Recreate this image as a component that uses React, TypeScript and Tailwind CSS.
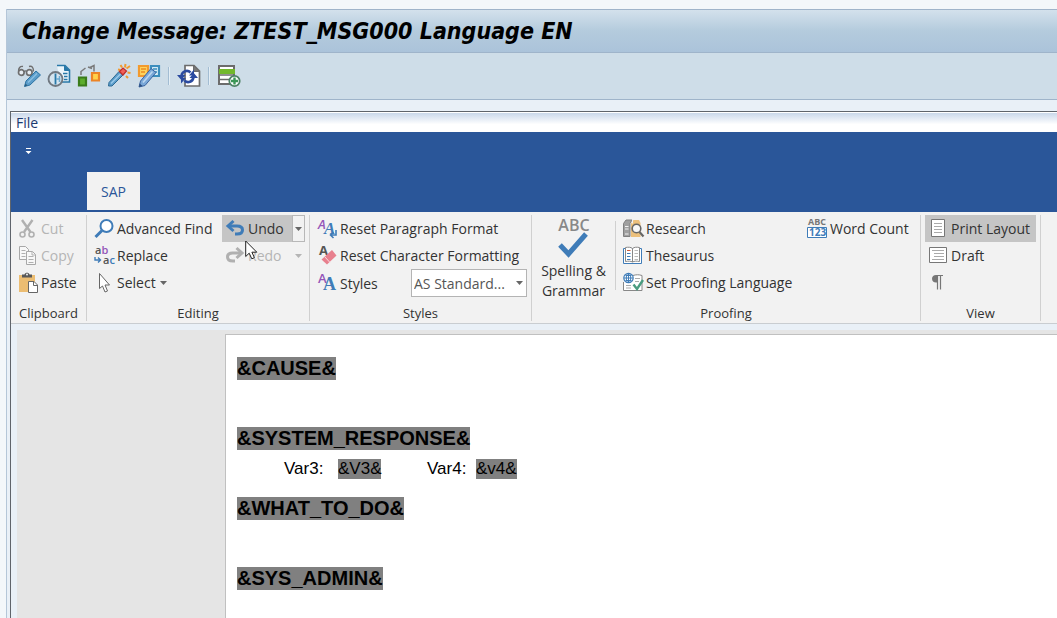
import React from 'react'

type IconProps = { children: React.ReactNode; size?: number }

const Icon = ({ children, size = 20 }: IconProps) => (
    <svg width={size} height={size} viewBox={`0 0 ${size} ${size}`} fill="none" className="shrink-0 overflow-visible" aria-hidden="true">
        {children}
    </svg>
)

const Caret = ({ className = '' }: { className?: string }) => (
    <svg width="7" height="4" viewBox="0 0 7 4" className={`shrink-0 ${className}`} aria-hidden="true">
        <path d="M0 0h7L3.5 4z" fill="currentColor" />
    </svg>
)

const toolbarIcons = {
    display: (
        <Icon size={24}>
            <path d="M1.500 7.500C1.500 4 3 2 6 2.500M7 8c1-1.500 2-1.500 3 0M12 2.500c3-1 4.500 1 4.500 5" stroke="#6f6f6f" strokeWidth="1.400" />
            <circle cx="4.300" cy="8.500" r="2.800" fill="#e8eef3" stroke="#6f6f6f" strokeWidth="1.700" />
            <circle cx="12.300" cy="8.500" r="2.800" fill="#e8eef3" stroke="#6f6f6f" strokeWidth="1.700" />
            <path d="M7.500 22.500l1.500-5.500L19 7l4.500 4L13 21z" fill="#5b9cc9" stroke="#2d74a4" strokeLinejoin="round" />
            <path d="M11 18.500l9-9" stroke="#8cc0e2" strokeWidth="1.500" />
            <path d="M7.500 22.500l1-3 2 2z" fill="#2d5f80" />
        </Icon>
    ),
    check: (
        <Icon size={24}>
            <path d="M10 1.500h8l4.500 4.500V18H13" fill="#eaf4fa" stroke="#2878a8" strokeWidth="1.600" />
            <path d="M17.500 1.500v5h5" fill="#2878a8" stroke="#2878a8" />
            <path d="M16 9.500h4.500M17 12.500h3.500M17 15.500h3.500" stroke="#2878a8" strokeWidth="1.400" />
            <circle cx="8.500" cy="15" r="7" fill="#d4e4ef" stroke="#707880" strokeWidth="1.900" />
            <path d="M8.500 9.500v11" stroke="#2878a8" strokeWidth="1.800" />
            <path d="M9 15h3M12.500 12v6" stroke="#6aa9cf" strokeWidth="1.500" />
        </Icon>
    ),
    objects: (
        <Icon size={24}>
            <path d="M4 11V7.500L8.500 4M11 3l4 1.500M13 3.500L17 1.500v6" stroke="#7a7a7a" strokeWidth="1.500" />
            <path d="M2 13.500h7v8H2z" fill="#5cad2c" stroke="#3b7c1b" strokeWidth="2.200" />
            <path d="M15 9h7v7.500h-7z" fill="#ffd24a" stroke="#ec8426" strokeWidth="2.200" />
        </Icon>
    ),
    activate: (
        <Icon size={24}>
            <path d="M13.500 1l1.500 2.500M18.500 0l-.5 3.500M23 2l-3.500 2.500M20.500 8.500l3 .5M19 12l2 2M11 5.500l2.500.5" stroke="#f29a2e" strokeWidth="2" />
            <path d="M1.500 22l.5-3.500L12 7.500l4 3.500L5 22z" fill="#5b9cc9" stroke="#2d6a94" strokeLinejoin="round" />
            <path d="M4 19.500l9.500-9.500" stroke="#9ccaea" strokeWidth="1.500" />
            <path d="M12.500 7.500L16 4l3.500 3L16 11z" fill="#f0605a" stroke="#c22e28" strokeWidth="1.200" />
        </Icon>
    ),
    compare: (
        <Icon size={24}>
            <path d="M2 2h9v10H2z" fill="#ffd45c" stroke="#f29a2e" strokeWidth="2.200" />
            <path d="M4 5h5M4 8h4" stroke="#ec8c22" strokeWidth="1.500" />
            <path d="M14 2h8v10h-8z" fill="#d7ecf7" stroke="#3d8ebd" strokeWidth="2.200" />
            <path d="M16 5h4M17 8h3" stroke="#3d8ebd" strokeWidth="1.500" />
            <path d="M2 23l1.500-6L14 4.500l5 4L8 21.500z" fill="#7aa8d8" stroke="#3a64a0" strokeLinejoin="round" />
            <path d="M6 18.500L15.500 7.500" stroke="#bcd6ef" strokeWidth="1.700" />
            <path d="M2 23l.8-3.500 2.700 2.500z" fill="#2d4f80" />
        </Icon>
    ),
    refresh: (
        <Icon size={24}>
            <path d="M8 1.500h9l5.500 5.500V22H8z" fill="#fff" stroke="#6c6c6c" strokeWidth="1.700" />
            <path d="M16.500 1.500V7.500h6z" fill="#777" stroke="#6c6c6c" />
            <path d="M4.500 12c.5-5 6-6.500 9-3.500M16.500 13c-.5 5-6 6.500-9 3.500" stroke="#2b4ba0" strokeWidth="2.600" />
            <path d="M0 11h8.500l-4.200 5zM12.500 14H21l-4.200-5z" fill="#2b4ba0" />
            <path d="M12 11.500h5V5.500zM9 14H4v5.500z" fill="#2b4ba0" />
        </Icon>
    ),
    append: (
        <Icon size={24}>
            <path d="M2 2h15v18H2z" fill="#fff" stroke="#6c6c6c" strokeWidth="2" />
            <path d="M2 5h16v5H2z" fill="#72b82c" />
            <path d="M2 11h15M2 15.500h12" stroke="#6c6c6c" strokeWidth="1.500" />
            <circle cx="17.500" cy="17" r="5.200" fill="#fff" stroke="#4e8265" strokeWidth="1.800" />
            <path d="M17.500 13.500v7M14 17h7" stroke="#3b9656" strokeWidth="2.400" />
        </Icon>
    ),
}

const CutIcon = () => (
    <Icon>
        <path d="M3 1l8.500 12M13.500 1L5 13" stroke="#b0b0b0" strokeWidth="2.400" />
        <circle cx="3.500" cy="15.500" r="2.500" stroke="#b0b0b0" strokeWidth="1.600" />
        <circle cx="12.500" cy="15.500" r="2.500" stroke="#b0b0b0" strokeWidth="1.600" />
    </Icon>
)

const CopyIcon = () => (
    <Icon>
        <path d="M.5 .5h6l3 3v10h-9z" fill="#f8f8f8" stroke="#a8a8a8" />
        <path d="M2.500 4.500h4M2.500 7.500h4M2.500 10.500h4" stroke="#b0b0b0" />
        <path d="M7.500 5.500h6l3 3v10h-9z" fill="#f8f8f8" stroke="#a8a8a8" />
        <path d="M13 5.500V9h3.500M9.500 10.500h5M9.500 13.500h5M9.500 16.500h5" stroke="#b0b0b0" />
    </Icon>
)

const PasteIcon = () => (
    <Icon>
        <path d="M0 2h16v17H0z" fill="#ecbd72" />
        <path d="M3 1.500h2.500C6-1 10-1 10.500 1.500H13v3H3z" fill="#595959" />
        <circle cx="8" cy="1.500" r="1" fill="#f2f2f2" />
        <path d="M9.500 8.500H15l3.500 3.500v7.500h-9z" fill="#fff" stroke="#666" />
        <path d="M14.500 8.500v4h4" stroke="#666" />
    </Icon>
)

const FindIcon = () => (
    <Icon>
        <circle cx="11.500" cy="7" r="6" fill="#fff" stroke="#3f7cb8" strokeWidth="2" />
        <path d="M7 11.500L.5 18" stroke="#3f7cb8" strokeWidth="3" />
    </Icon>
)

const ReplaceIcon = () => (
    <Icon>
        <text y="8" fontFamily="'Open Sans', sans-serif" fontSize="11" fontWeight="600" fill="#555">
            a<tspan fill="#9455b8">b</tspan>
        </text>
        <text x="8" y="18" fontFamily="'Open Sans', sans-serif" fontSize="11" fontWeight="600" fill="#555">
            a<tspan fill="#3f7cb8">c</tspan>
        </text>
        <path d="M0 11v3h5M3 11.500L5.500 14 3 16.500" stroke="#3f7cb8" strokeWidth="1.400" />
    </Icon>
)

const SelectIcon = () => (
    <Icon>
        <path d="M4.500 .5v15l3-2.500 2.500 6 2.500-1L10 12h4.500z" fill="#fff" stroke="#666" />
    </Icon>
)

const UndoIcon = () => (
    <Icon>
        <path d="M3 7h8c3.500 0 5.500 1.500 5.500 4s-2 4-5.500 4H9" stroke="#3f7cb8" strokeWidth="3" />
        <path d="M7.500 2L2 7l5.500 5" stroke="#3f7cb8" strokeWidth="3" />
    </Icon>
)

const RedoIcon = () => (
    <Icon>
        <path d="M14 7H6.500C3.500 7 1.500 8.500 1.500 11s2 4 5.500 4h2" stroke="#b0b0b0" strokeWidth="3" />
        <path d="M10.500 2L16 7l-5.500 5" stroke="#b0b0b0" strokeWidth="3" />
    </Icon>
)

const ResetParagraphIcon = () => (
    <Icon>
        <text x="0" y="10" fontFamily="'Open Sans', sans-serif" fontSize="13" fontStyle="italic" fontWeight="600" fill="#9455b8">A</text>
        <text x="6" y="15" fontFamily="'Liberation Serif', serif" fontSize="17" fontStyle="italic" fontWeight="700" fill="#3f7cb8">A</text>
        <path d="M18 11v5h-5M15.500 13L12.500 16l3 3" stroke="#3f7cb8" strokeWidth="1.600" />
    </Icon>
)

const ResetCharacterIcon = () => (
    <Icon>
        <text x="1" y="9" fontFamily="'Open Sans', sans-serif" fontSize="13" fontWeight="700" fill="#555">A</text>
        <path d="M3.500 13.500L14 4l4.500 5.500L9 18.500z" fill="#e8808e" />
        <path d="M6.500 10.500l5.500 6" stroke="#f8dce0" />
    </Icon>
)

const StylesIcon = () => (
    <Icon>
        <text x="0" y="10" fontFamily="'Open Sans', sans-serif" fontSize="13" fontWeight="600" fill="#9455b8">A</text>
        <text x="5" y="17" fontFamily="'Liberation Serif', serif" fontSize="18" fontWeight="700" fill="#3f7cb8">A</text>
    </Icon>
)

const ResearchIcon = () => (
    <Icon>
        <path d="M-.5 4.500L2 1h6L6 4.500v13h-6.500z" fill="#a0a0a0" stroke="#808080" />
        <path d="M1 7.500h3.500M1 10h3.500M1 15h3.500" stroke="#f2f2f2" />
        <path d="M7 4.500L9.500 1H15l1.500 3v14H7z" fill="#ecc07c" />
        <path d="M8.500 1v3.500" stroke="#f2f2f2" />
        <circle cx="12.500" cy="9.500" r="4.300" fill="#f8f8f8" stroke="#666" strokeWidth="1.600" />
        <path d="M15.500 13l4 4.500" stroke="#666" strokeWidth="2.200" />
    </Icon>
)

const ThesaurusIcon = () => (
    <Icon>
        <path d="M-.5 2.500h18v15h-18z" fill="#fff" stroke="#3f7cb8" />
        <path d="M1.500 1.500c3-.5 5-.5 7 1 2-1.500 4-1.500 7-1v14c-3-.5-5-.5-7 .5-2-1-4-1-7-.5z" fill="#fff" stroke="#888" />
        <path d="M8.500 2.500V16" stroke="#888" />
        <path d="M3 4.500h3.500" stroke="#d05a38" />
        <path d="M3 7.500h3.500M3 10.500h3.500M3 13.500h3.500" stroke="#3f7cb8" />
        <path d="M10.500 4.500H14M10.500 7.500H14M10.500 10.500H14M10.500 13.500H14" stroke="#bbb" />
    </Icon>
)

const LanguageIcon = () => (
    <Icon>
        <path d="M9 2.500c3-1 6-1 9 0v15H-.5V9" fill="#fff" stroke="#888" />
        <path d="M2 12.500h5M2 15h5M11 5.500h5M11 8.500h4" stroke="#aaa" />
        <circle cx="4.500" cy="5" r="4.700" fill="#fff" stroke="#3f7cb8" strokeWidth="1.200" />
        <path d="M0 5h9M4.500.5v9M1.500 2.500h6M1.500 7.500h6" stroke="#3f7cb8" />
        <ellipse cx="4.500" cy="5" rx="2.200" ry="4.500" stroke="#3f7cb8" />
        <path d="M9.500 11.500l3.500 4.500L19 7" stroke="#4a9c80" strokeWidth="2.400" />
    </Icon>
)

const WordCountIcon = () => (
    <Icon>
        <text x="0" y="6" fontFamily="'Open Sans', sans-serif" fontSize="9" fontWeight="700" fill="#777">ABC</text>
        <path d="M-.5 8.500h19v10h-19z" fill="#fff" stroke="#3f7cb8" />
        <text x="1" y="17" fontFamily="'Open Sans', sans-serif" fontSize="10" fontWeight="700" fill="#3f7cb8">123</text>
    </Icon>
)

const PrintLayoutIcon = () => (
    <Icon>
        <path d="M2.500 .5h13v17h-13z" fill="#fff" stroke="#777" />
        <path d="M5 4.500h8M5 7.500h8M5 10.500h8M5 13.500h8" stroke="#aaa" />
    </Icon>
)

const DraftIcon = () => (
    <Icon>
        <path d="M.5 1.500h17v15H.5z" fill="#fff" stroke="#777" />
        <path d="M3 4.500h12M5 7.500h10M5 10.500h10M3 13.500h12" stroke="#aaa" />
    </Icon>
)

const ParagraphIcon = () => (
    <Icon>
        <path d="M7 2.500h7M8.500 2.500v14M11.500 2.500v14" stroke="#777" strokeWidth="1.200" />
        <path d="M8.500 2H7C4.500 2 3 3.500 3 5.700S4.500 9.500 7 9.500h1.500z" fill="#777" />
    </Icon>
)

type CommandProps = {
    icon: React.ReactNode
    label: string
    disabled?: boolean
    caret?: boolean
    className?: string
}

const Command = ({ icon, label, disabled, caret, className = '' }: CommandProps) => (
    <button
        type="button"
        disabled={disabled}
        className={`flex h-[27px] items-center gap-[2px] whitespace-nowrap disabled:text-[#b5b5b5] ${className}`}
    >
        {icon}
        {label}
        {caret && <Caret className="ml-[2px] text-[#666]" />}
    </button>
)

type GroupProps = { title: string; className: string; children: React.ReactNode }

const Group = ({ title, className, children }: GroupProps) => (
    <section aria-label={title} className={`flex shrink-0 flex-col border-r border-[#d0d0d0] ${className}`}>
        <div className="flex h-[81px]">{children}</div>
        <div className="mt-2 text-center text-[13px] leading-[18px]">{title}</div>
    </section>
)

const Mark = ({ children }: { children: React.ReactNode }) => (
    <mark className="inline-block bg-[#808080] text-black">{children}</mark>
)

const ToolButton = ({ label, children }: { label: string; children: React.ReactNode }) => (
    <button type="button" aria-label={label}>{children}</button>
)

const Separator = () => <div className="mx-px h-[18px] w-[2px] border-r border-l border-r-[#e4eef5] border-l-[#a3bdd3]" />

const Ribbon = () => (
    <div className="flex h-[112px] overflow-hidden border-b border-[#c9cdd1] bg-[#f2f2f2] pt-[3px] pb-[2px] text-[14px] text-[#333]">
        <Group title="Clipboard" className="w-[76px]">
            <div className="pl-2">
                <Command icon={<CutIcon />} label="Cut" disabled />
                <Command icon={<CopyIcon />} label="Copy" disabled />
                <Command icon={<PasteIcon />} label="Paste" />
            </div>
        </Group>

        <Group title="Editing" className="w-[223px]">
            <div className="w-[135px] pl-2">
                <Command icon={<FindIcon />} label="Advanced Find" />
                <Command icon={<ReplaceIcon />} label="Replace" />
                <Command icon={<SelectIcon />} label="Select" caret />
            </div>
            <div>
                <div className="flex">
                    <Command icon={<UndoIcon />} label="Undo" className="w-[70px] bg-[#c5c5c5] pl-1" />
                    <button type="button" aria-label="Undo history" className="flex w-[13px] items-center justify-center border border-[#b8b8b8] text-[#666]">
                        <Caret />
                    </button>
                </div>
                <div className="relative flex">
                    <Command icon={<RedoIcon />} label="Redo" disabled className="w-[70px] pl-1" />
                    <button type="button" aria-label="Redo history" disabled className="flex w-[13px] items-center justify-center text-[#b5b5b5]">
                        <Caret />
                    </button>
                    <svg width="13" height="20" viewBox="0 0 13 20" className="absolute -top-[2px] left-[23px]" aria-hidden="true">
                        <path d="M.7 1v15.500l3.500-3.300 2.600 5.600 2.600-1.200-2.500-5.400h4.900z" fill="#fff" stroke="#222" />
                    </svg>
                </div>
            </div>
        </Group>

        <Group title="Styles" className="w-[222px]">
            <div className="w-full pr-1 pl-2">
                <Command icon={<ResetParagraphIcon />} label="Reset Paragraph Format" />
                <Command icon={<ResetCharacterIcon />} label="Reset Character Formatting" />
                <div className="flex items-center justify-between">
                    <label htmlFor="style" className="flex items-center gap-[2px]">
                        <StylesIcon />
                        Styles
                    </label>
                    <div className="relative">
                        <select id="style" className="h-[28px] w-[116px] appearance-none border border-[#b4b4b4] bg-white pl-[2px] text-[#555]">
                            <option>AS Standard...</option>
                        </select>
                        <Caret className="pointer-events-none absolute top-3 right-1 text-[#666]" />
                    </div>
                </div>
            </div>
        </Group>

        <Group title="Proofing" className="w-[389px]">
            <button type="button" className="flex w-[83px] flex-col items-center leading-[20px]">
                <svg width="34" height="43" viewBox="0 0 34 43" fill="none" className="mt-[3px] shrink-0" aria-hidden="true">
                    <text x="17" y="13" textAnchor="middle" fontFamily="'Open Sans', sans-serif" fontSize="16" fontWeight="600" fill="#888">ABC</text>
                    <path d="M3 27l8.500 9L29 16" stroke="#3f7cb8" strokeWidth="5" />
                </svg>
                <span>Spelling &amp;</span>
                <span>Grammar</span>
            </button>
            <div className="my-[6px] w-px bg-[#d0d0d0]" />
            <div className="w-[192px] pl-2">
                <Command icon={<ResearchIcon />} label="Research" />
                <Command icon={<ThesaurusIcon />} label="Thesaurus" />
                <Command icon={<LanguageIcon />} label="Set Proofing Language" />
            </div>
            <div>
                <Command icon={<WordCountIcon />} label="Word Count" />
            </div>
        </Group>

        <Group title="View" className="w-[120px]">
            <div className="w-full px-1">
                <Command icon={<PrintLayoutIcon />} label="Print Layout" className="w-full bg-[#c5c5c5] pl-1" />
                <Command icon={<DraftIcon />} label="Draft" className="pl-1" />
                <button type="button" aria-label="Show paragraph marks" className="flex h-[27px] items-center pl-1">
                    <ParagraphIcon />
                </button>
            </div>
        </Group>
    </div>
)

const Document = () => (
    <div className="flex grow bg-[#e5e5e5] pt-1">
        <div className="ml-[208px] grow border-t border-l border-[#c0c0c0] bg-white pt-[22px] pl-[11px] font-['Liberation_Sans',Arial,sans-serif] text-black">
            <div className="h-[70px]">
                <h2 className="text-[20px] leading-[23px] font-bold"><Mark>&amp;CAUSE&amp;</Mark></h2>
            </div>
            <div className="h-[70px]">
                <h2 className="text-[20px] leading-[23px] font-bold"><Mark>&amp;SYSTEM_RESPONSE&amp;</Mark></h2>
                <p className="mt-[9px] flex pl-[47px] text-[17px] leading-[20px]">
                    <span className="w-[54px]">Var3:</span>
                    <span className="w-[89px]"><Mark>&amp;V3&amp;</Mark></span>
                    <span className="w-[49px]">Var4:</span>
                    <Mark>&amp;v4&amp;</Mark>
                </p>
            </div>
            <div className="h-[70px]">
                <h2 className="text-[20px] leading-[23px] font-bold"><Mark>&amp;WHAT_TO_DO&amp;</Mark></h2>
            </div>
            <h2 className="text-[20px] leading-[23px] font-bold"><Mark>&amp;SYS_ADMIN&amp;</Mark></h2>
        </div>
    </div>
)

const App = () => {
    return (
        <div className="flex min-h-screen flex-col overflow-hidden bg-[#f3f7fa] pt-[9px] pl-[6px] font-['Open_Sans','Noto_Sans',sans-serif]">
            <div className="flex grow flex-col border-l border-[#b4c6d8] bg-[#e9f0f7]">
                <header className="flex h-[44px] items-center border-t border-b border-[#9fb4ca] bg-linear-to-b from-[#d3e1ec] via-[#b4cbdd] to-[#abc3da] pl-[15px]">
                    <h1 className="font-['DejaVu_Sans_Condensed','DejaVu_Sans',sans-serif] text-[23px] leading-[28px] font-bold whitespace-nowrap text-black italic">
                        Change Message: ZTEST_MSG000 Language EN
                    </h1>
                </header>
                <div className="flex h-[47px] items-center gap-[6px] border-b border-[#9fb4ca] bg-[#cedde8] pl-[10px]">
                    <ToolButton label="Display / Change">{toolbarIcons.display}</ToolButton>
                    <ToolButton label="Check">{toolbarIcons.check}</ToolButton>
                    <ToolButton label="Other object">{toolbarIcons.objects}</ToolButton>
                    <ToolButton label="Activate">{toolbarIcons.activate}</ToolButton>
                    <ToolButton label="Compare">{toolbarIcons.compare}</ToolButton>
                    <Separator />
                    <ToolButton label="Refresh">{toolbarIcons.refresh}</ToolButton>
                    <Separator />
                    <ToolButton label="Append">{toolbarIcons.append}</ToolButton>
                </div>

                <main className="mt-[11px] ml-[3px] flex grow flex-col border-t border-l border-[#5f646b]">
                    <nav className="flex h-[20px] items-center border-t border-white bg-linear-to-b from-[#cad8ea] to-white to-60% pl-[5px]">
                        <button type="button" className="text-[14px] leading-[20px] text-[#1c3a70]">File</button>
                    </nav>
                    <div className="flex h-[80px] flex-col justify-between bg-[#2a5699]">
                        <button type="button" aria-label="Customize quick access" className="mt-4 ml-[14px] w-[7px]">
                            <svg width="7" height="6" viewBox="0 0 7 6" aria-hidden="true">
                                <path d="M1 0h5v1H1zM0.500 3h6l-3 3z" fill="#fff" />
                            </svg>
                        </button>
                        <button type="button" className="mb-[2px] ml-[76px] h-[38px] w-[53px] bg-[#f2f2f2] text-[14px] text-[#2a5699]">SAP</button>
                    </div>
                    <Ribbon />
                    <div className="mt-[6px] ml-[6px] flex grow flex-col">
                        <Document />
                    </div>
                </main>
            </div>
        </div>
    )
}

export default App
